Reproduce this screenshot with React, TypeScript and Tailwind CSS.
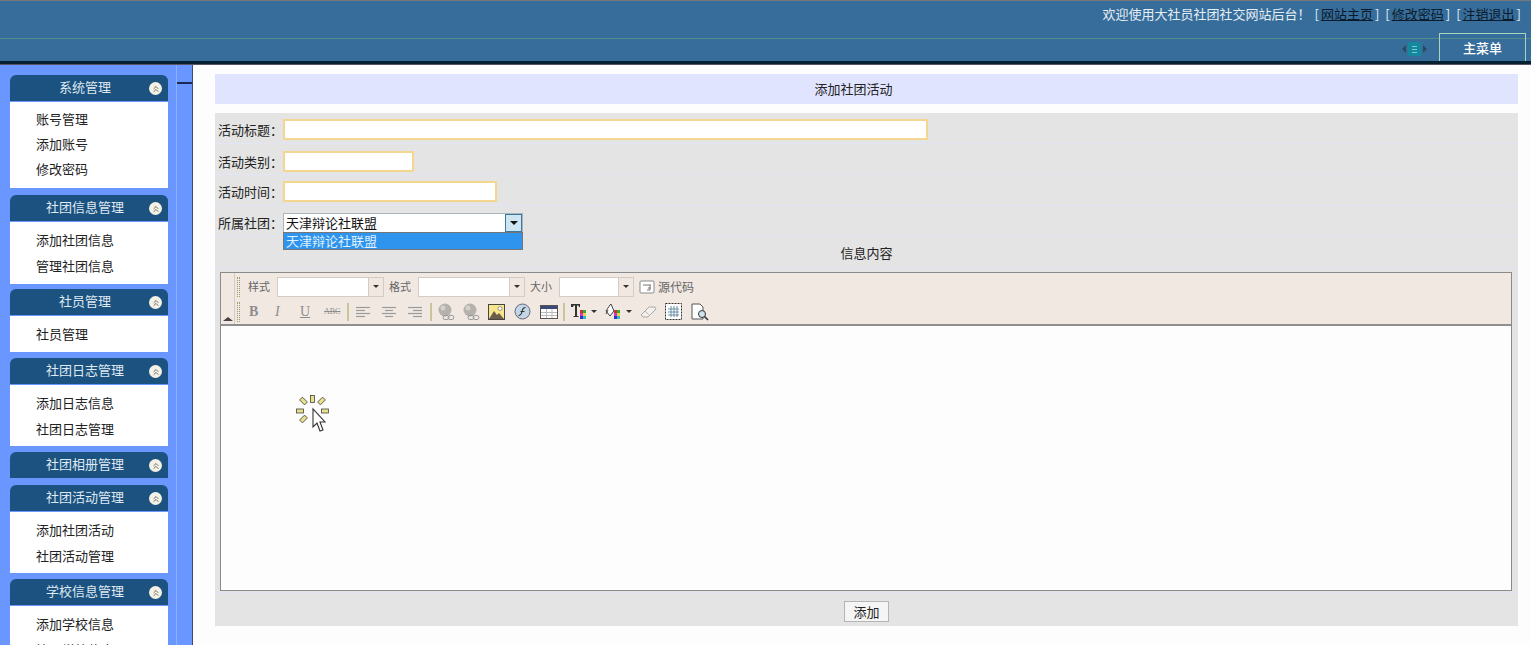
import { ChevronsUp } from "lucide-react";

const groups = [
  { title: "系统管理", items: ["账号管理", "添加账号", "修改密码"], body: "h-[86px] pb-[2px]", row: "h-[25px]", mb: "mb-[7px]" },
  { title: "社团信息管理", items: ["添加社团信息", "管理社团信息"], body: "h-[62px]", row: "h-[26px]", mb: "mb-[5px]" },
  { title: "社员管理", items: ["社员管理"], body: "h-[36px]", row: "h-[26px]", mb: "mb-[6px]" },
  { title: "社团日志管理", items: ["添加日志信息", "社团日志管理"], body: "h-[61px]", row: "h-[26px]", mb: "mb-[6px]" },
  { title: "社团相册管理", items: [], body: "", row: "", mb: "mb-[7px]" },
  { title: "社团活动管理", items: ["添加社团活动", "社团活动管理"], body: "h-[61px]", row: "h-[26px]", mb: "mb-[6px]" },
  { title: "学校信息管理", items: ["添加学校信息", "管理学校信息"], body: "h-[62px]", row: "h-[26px]", mb: "" },
];

const Group = ({ g }: { g: (typeof groups)[number] }) => (
  <div className={g.mb}>
    <div className="relative h-[26px] rounded-t-[6px] bg-[#1c527f] flex items-center justify-center pb-[4px] pr-[8px] text-[#dfe9f2] text-[13px] leading-none">
      {g.title}
      <span className="absolute left-[139px] top-[7px] w-[13px] h-[13px] rounded-full bg-[#f4f1e6] flex items-center justify-center">
        <ChevronsUp size={10} strokeWidth={2} color="#555" />
      </span>
    </div>
    {g.items.length > 0 && (
      <div className={`mt-px bg-white ${g.body} flex flex-col justify-center pl-[26px]`}>
        {g.items.map((t) => (
          <div key={t} className={`${g.row} flex items-center text-[13px] text-[#222] whitespace-nowrap`}>{t}</div>
        ))}
      </div>
    )}
  </div>
);

const Field = ({ label, w, className }: { label: string; w: string; className: string }) => (
  <div className={`flex items-center border-b border-[#e2e5f5] ${className}`}>
    <span className="w-[68px] pl-[3px] text-[13px] leading-[20px] text-[#222] whitespace-nowrap">{label}：</span>
    <div className={`${w} h-[21px] bg-white border-2 border-[#f3d68f]`} />
  </div>
);

const ToolSelect = ({ label, w, className }: { label: string; w: string; className?: string }) => (
  <div className={`flex items-center gap-[7px] ${className ?? ""}`}>
    <span className="text-[11px] text-[#666] whitespace-nowrap">{label}</span>
    <div className={`${w} h-[20px] flex border border-[#d3ccc6] bg-white`}>
      <div className="flex-1" />
      <div className="w-[15px] bg-[#f1e8e2] border-l border-[#d3ccc6] flex items-center justify-center">
        <span className="w-0 h-0 border-x-[3px] border-x-transparent border-t-[3px] border-t-[#333]" />
      </div>
    </div>
  </div>
);

const Grip = () => (
  <div className="w-[3px] h-[20px] border-x border-dotted border-[#9c9a6e] shrink-0" />
);

const Sep = ({ className }: { className: string }) => <div className={`w-[2px] h-[18px] bg-[#c9c59b] shrink-0 ${className}`} />;

const Lines = ({ kind }: { kind: "l" | "c" | "r" }) => {
  const xs = kind === "l" ? [[1, 15], [1, 10], [1, 15], [1, 10]] : kind === "c" ? [[1, 15], [4, 12], [1, 15], [4, 12]] : [[1, 15], [6, 15], [1, 15], [6, 15]];
  return (
    <svg width="16" height="14" viewBox="0 0 16 14" className="shrink-0">
      {xs.map(([a, b], i) => (
        <line key={i} x1={a} x2={b} y1={2.5 + i * 3} y2={2.5 + i * 3} stroke="#9a9a9a" strokeWidth="1.2" />
      ))}
    </svg>
  );
};

const Globe = ({ className }: { className?: string }) => (
  <svg width="18" height="18" viewBox="0 0 18 18" className={`shrink-0 ${className ?? ""}`}>
    <circle cx="8" cy="7" r="6.5" fill="#b5b1ac" />
    <circle cx="6" cy="5" r="2.5" fill="#d4d1cd" />
    <ellipse cx="9" cy="14.5" rx="3" ry="2.2" fill="none" stroke="#999" />
    <ellipse cx="14" cy="14.5" rx="3" ry="2.2" fill="none" stroke="#999" />
  </svg>
);

const Swatches = () => (
  <g>
    <rect x="9" y="7" width="3" height="3" fill="#c33" />
    <rect x="12" y="7" width="3" height="3" fill="#3a3" />
    <rect x="9" y="10" width="3" height="3" fill="#c3c" />
    <rect x="12" y="10" width="3" height="3" fill="#dd3" />
    <rect x="9" y="13" width="3" height="3" fill="#33c" />
    <rect x="12" y="13" width="3" height="3" fill="#3bb" />
  </g>
);

const Caret = () => <span className="w-0 h-0 border-x-[3px] border-x-transparent border-t-[3px] border-t-[#333] ml-[3px]" />;

const Toolbar = () => (
  <div className="h-[53px] bg-[#f1e8e2] flex border-b-2 border-[#8f8f8f] shrink-0">
    <div className="w-[14px] border-r border-[#d3ccc6] flex items-end justify-center pb-[3px]">
      <span className="w-0 h-0 border-x-[5px] border-x-transparent border-b-[4px] border-b-[#444]" />
    </div>
    <div className="flex flex-col pl-[2px]">
      <div className="h-[27px] flex items-center pt-[1px]">
        <Grip />
        <ToolSelect label="样式" w="w-[107px]" className="ml-[8px]" />
        <ToolSelect label="格式" w="w-[107px]" className="ml-[5px]" />
        <ToolSelect label="大小" w="w-[75px]" className="ml-[5px]" />
        <svg width="16" height="16" viewBox="0 0 16 16" className="ml-[5px] shrink-0">
          <rect x="1" y="2" width="14" height="12" rx="1" fill="#fff" stroke="#8a8a8a" />
          <path d="M4 6h8M9 9h3M11 6v5H8" fill="none" stroke="#777" />
        </svg>
        <span className="ml-[3px] text-[12px] text-[#666] whitespace-nowrap">源代码</span>
      </div>
      <div className="h-[25px] flex items-center">
        <Grip />
        <span className="ml-[9px] w-[14px] text-[14px] font-bold text-[#8d8d8d] font-['Liberation_Serif',serif] leading-none">B</span>
        <span className="ml-[12px] w-[14px] text-[14px] italic text-[#8d8d8d] font-['Liberation_Serif',serif] leading-none">I</span>
        <span className="ml-[11px] w-[14px] text-[14px] underline text-[#8d8d8d] font-['Liberation_Serif',serif] leading-none">U</span>
        <span className="ml-[10px] w-[18px] text-[8px] line-through text-[#8d8d8d] font-['Liberation_Serif',serif] leading-none">ABC</span>
        <Sep className="ml-[5px]" />
        <div className="ml-[6px] flex items-center gap-[10px]">
          <Lines kind="l" />
          <Lines kind="c" />
          <Lines kind="r" />
        </div>
        <Sep className="ml-[7px]" />
        <Globe className="ml-[5px]" />
        <Globe className="ml-[7px]" />
        <svg width="17" height="16" viewBox="0 0 17 16" className="ml-[8px] shrink-0">
          <rect x="0.5" y="0.5" width="16" height="15" fill="#f6e58a" stroke="#444" />
          <circle cx="12" cy="4.5" r="2" fill="#fff" stroke="#777" strokeWidth="0.7" />
          <path d="M1 15 L6 7 L9 11 L11 9 L16 15 Z" fill="#6b5c4c" />
        </svg>
        <svg width="17" height="17" viewBox="0 0 17 17" className="ml-[9px] shrink-0">
          <circle cx="8.5" cy="8.5" r="7.5" fill="#c3d6e6" stroke="#667" />
          <path d="M11.5 4.5C9 4.5 8.5 6 8 8.5S6.5 12.5 4.5 12.5M6.5 8.5h4" fill="none" stroke="#333" strokeWidth="1.2" />
        </svg>
        <svg width="18" height="14" viewBox="0 0 18 14" className="ml-[9px] shrink-0">
          <rect x="0.5" y="0.5" width="17" height="13" fill="#fff" stroke="#555" />
          <rect x="1" y="1" width="16" height="3" fill="#3b4a78" />
          <path d="M1 7.5h16M1 10.5h16M6.5 4v9M12 4v9" stroke="#bbb" fill="none" />
        </svg>
        <Sep className="ml-[5px]" />
        <svg width="17" height="17" viewBox="0 0 17 17" className="ml-[6px] shrink-0">
          <path d="M0 1h9v3H8L7.5 2.5H6V13h1.5v1h-5v-1H4V2.5H2.5L2 4H0Z" fill="#333" />
          <Swatches />
        </svg>
        <Caret />
        <svg width="18" height="17" viewBox="0 0 18 17" className="ml-[8px] shrink-0">
          <path d="M1 8 L5 2 L6 1 L9 8 L5 13 Z" fill="#fff" stroke="#444" />
          <path d="M3 7 L1 11" stroke="#444" />
          <Swatches />
        </svg>
        <Caret />
        <svg width="17" height="14" viewBox="0 0 17 14" className="ml-[8px] shrink-0">
          <path d="M1 10 L9 2 H15 L16 4 L8 12 H3 Z" fill="#f4efea" stroke="#a8a8a8" />
          <path d="M5 6 L10 11" stroke="#bbb" />
        </svg>
        <svg width="17" height="17" viewBox="0 0 17 17" className="ml-[8px] shrink-0">
          <rect x="0.5" y="0.5" width="16" height="16" fill="#fff" stroke="#333" strokeDasharray="2 1" />
          <path d="M3 6h11M3 9h11M3 12h11M6 3v11M9 3v11M12 3v11" stroke="#6d8fa8" fill="none" />
        </svg>
        <svg width="19" height="18" viewBox="0 0 19 18" className="ml-[8px] shrink-0">
          <path d="M2 1h8l3 3v12H2Z" fill="#fff" stroke="#555" />
          <circle cx="12" cy="11" r="3.5" fill="#cfe3ee" stroke="#333" />
          <path d="M14.5 13.5 L18 17" stroke="#333" strokeWidth="1.6" />
        </svg>
      </div>
    </div>
  </div>
);

const Spinner = () => (
  <svg width="36" height="42" viewBox="0 0 36 42" className="absolute left-[295px] top-[394px]">
    <g fill="#e6e08a" stroke="#444" strokeWidth="0.8">
      <rect x="15.5" y="1.5" width="4" height="7" />
      <rect x="1.5" y="15" width="7" height="4" />
      <rect x="26.5" y="15" width="7" height="4" />
      <rect x="5" y="5" width="7" height="4" transform="rotate(45 8.5 7)" />
      <rect x="23" y="5" width="7" height="4" transform="rotate(-45 26.5 7)" />
      <rect x="5" y="23" width="7" height="4" transform="rotate(-45 8.5 25)" />
    </g>
    <path d="M18 15 V33 L22 29 L25 37 L28 36 L25 28 L30 28 Z" fill="#fff" stroke="#333" strokeWidth="1.1" />
  </svg>
);

export default function App() {
  return (
    <div className="relative w-[1531px] h-[645px] overflow-hidden bg-[#fdfdfd] font-['Noto_Sans_CJK_SC','Liberation_Sans',sans-serif]">
      <header className="h-[65px] bg-[#376d9b] border-t border-[#777] flex flex-col">
        <div className="h-[38px] border-b border-[#4f8a8d] flex items-start pt-[3px] justify-end pr-[10px] gap-[6px] text-[13px] text-[#e6edf3] whitespace-nowrap shrink-0">
          <span className="-mr-[2px]">欢迎使用大社员社团社交网站后台！</span>
          <span>[<a className="text-[#0b1a2a] underline mx-[2px]">网站主页</a>]</span>
          <span>[<a className="text-[#0b1a2a] underline mx-[2px]">修改密码</a>]</span>
          <span>[<a className="text-[#0b1a2a] underline mx-[2px]">注销退出</a>]</span>
        </div>
        <div className="flex-1 min-h-0 flex justify-end items-end pr-[5px]">
          <div className="flex items-center mr-[12px] mb-[5px] gap-[2px]">
            <span className="w-0 h-0 border-y-[4px] border-y-transparent border-r-[4px] border-r-[#2a4a5c]" />
            <span className="w-[13px] h-[14px] bg-[#15889f] flex flex-col justify-center items-center gap-[2px]">
              <span className="w-[5px] h-px bg-[#7cc]" />
              <span className="w-[5px] h-px bg-[#7cc]" />
              <span className="w-[5px] h-px bg-[#7cc]" />
            </span>
            <span className="w-0 h-0 border-y-[4px] border-y-transparent border-l-[4px] border-l-[#2a4a5c]" />
          </div>
          <div className="w-[87px] h-[28px] shrink-0 border-x border-t border-[#a9d6b8] flex items-center justify-center pt-[1px] text-white text-[13px] font-medium">主菜单</div>
        </div>
        <div className="h-[4px] bg-[#06202f] border-b border-[#556] shrink-0" />
      </header>
      <div className="flex h-[580px]">
        <aside className="w-[193px] bg-[#6a96ff] flex shrink-0 border-r border-[#3f4a66]">
          <div className="w-[158px] ml-[10px] pt-[10px] shrink-0">
            {groups.map((g) => (
              <Group key={g.title} g={g} />
            ))}
          </div>
          <div className="w-[16px] ml-[8px] border-l border-[#8eb0ff] flex flex-col">
            <div className="h-[19px] border-b-2 border-[#1a2a55]" />
          </div>
        </aside>
        <main className="flex-1 pl-[22px] pr-[13px] pt-[9px]">
          <div className="h-[30px] bg-[#e0e4ff] flex items-center justify-center pr-[26px] text-[13px] text-[#222]">添加社团活动</div>
          <div className="relative mt-[9px] h-[513px] bg-[#e4e4e4] flex flex-col">
            <Field label="活动标题" w="w-[645px]" className="pt-[6px] pb-[3px]" />
            <Field label="活动类别" w="w-[131px]" className="pt-[7px] pb-[2px]" />
            <Field label="活动时间" w="w-[214px]" className="pt-[6px] pb-[3px]" />
            <div className="flex items-center pt-[7px] pb-[3px] border-b border-[#e2e5f5]">
              <span className="w-[68px] pl-[3px] text-[13px] leading-[20px] text-[#222] whitespace-nowrap">所属社团：</span>
              <div className="w-[240px] h-[20px] bg-white border border-[#a9b4bd] flex items-center justify-between">
                <span className="pl-[2px] text-[13px] text-[#111] whitespace-nowrap">天津辩论社联盟</span>
                <span className="w-[17px] h-[18px] bg-[#cfe6f2] border border-[#3a7aa0] flex items-center justify-center">
                  <span className="w-0 h-0 border-x-[4px] border-x-transparent border-t-[4px] border-t-[#111]" />
                </span>
              </div>
            </div>
            <div className="absolute left-[68px] top-[119px] w-[240px] h-[18px] bg-[#2f94ee] border border-[#777] flex items-center pl-[2px] text-[13px] text-[#dff0ff] whitespace-nowrap">天津辩论社联盟</div>
            <div className="pt-[6px] pb-[4px] border-b border-[#e2e5f5] leading-[20px] text-center text-[13px] text-[#222]">信息内容</div>
            <div className="pt-[4px] pb-px px-[5px] pr-[6px] border-b border-[#e2e5f5]">
              <div className="h-[319px] flex flex-col bg-white border border-[#8a8a8a]">
                <Toolbar />
                <div className="flex-1 bg-[#fdfdfd]" />
              </div>
            </div>
            <div className="flex justify-center pt-[8px]">
              <button className="w-[45px] h-[21px] bg-[#f5f5f5] border border-[#b5b5b5] text-[13px] text-[#222] leading-none">添加</button>
            </div>
          </div>
        </main>
      </div>
      <Spinner />
    </div>
  );
}
